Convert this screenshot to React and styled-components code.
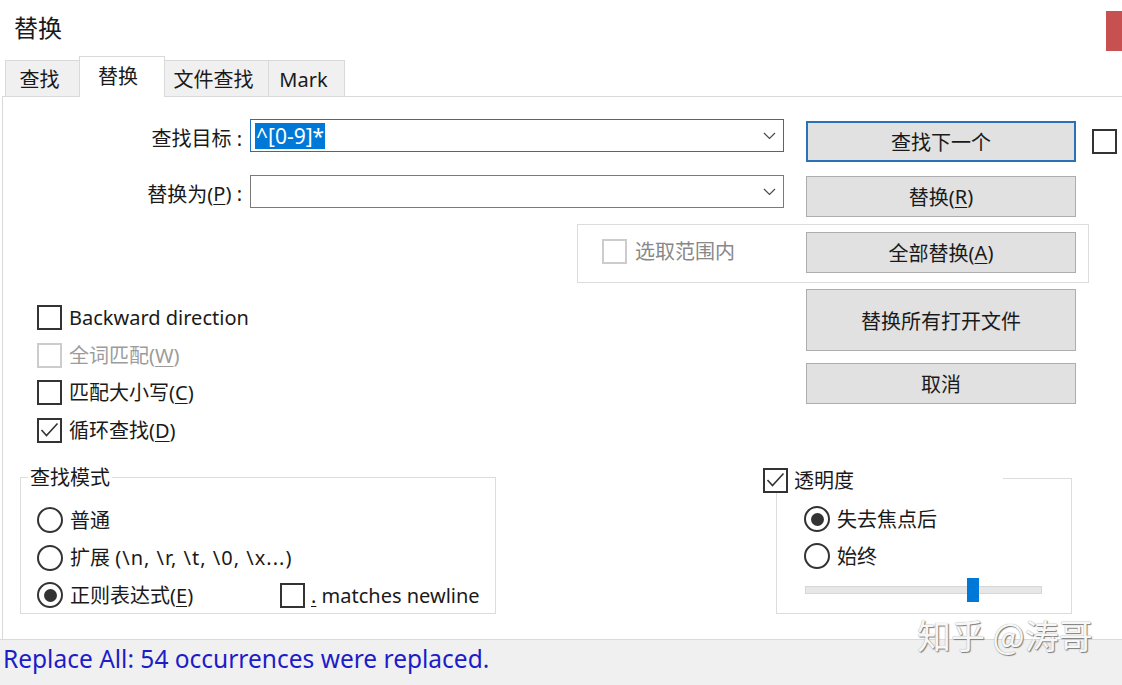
import React from "react";
import styled, { createGlobalStyle } from "styled-components";

const GlobalStyle = createGlobalStyle`
  html, body { margin: 0; padding: 0; background: #fff; }
  body {
    font-family: "Noto Sans", "Noto Sans CJK SC", sans-serif;
    color: #1a1a1a;
  }
  * { box-sizing: border-box; }
`;

const Window = styled.div`
  position: relative;
  width: 1122px;
  height: 685px;
  display: flex;
  flex-direction: column;
  overflow: hidden;
  background: #fff;
`;

const TitleBar = styled.div`
  height: 56px;
  flex-shrink: 0;
  display: flex;
  align-items: flex-start;
  justify-content: space-between;
`;

const Title = styled.h1`
  margin: 11px 0 0 14px;
  font-size: 24px;
  font-weight: 400;
  line-height: 34px;
`;

const CloseButton = styled.div`
  margin-top: 11px;
  width: 16px;
  height: 40px;
  background: #c75050;
`;

const TabStrip = styled.div`
  height: 40px;
  flex-shrink: 0;
  display: flex;
  align-items: flex-end;
  padding-left: 5px;
`;

const Tab = styled.div`
  position: relative;
  z-index: ${(p) => (p.$active ? 2 : 1)};
  width: ${(p) => p.$w}px;
  height: ${(p) => (p.$active ? 41 : 36)}px;
  margin-bottom: ${(p) => (p.$active ? -1 : 0)}px;
  margin-left: -1px;
  background: ${(p) => (p.$active ? "#fff" : "#f0f0f0")};
  border: 1px solid #d9d9d9;
  border-bottom: none;
  display: flex;
  align-items: center;
  justify-content: center;
  padding: ${(p) => (p.$active ? "0 8px 0 0" : "3px 6px 0 0")};
  font-size: 20px;
  line-height: 24px;
  &:first-child { margin-left: 0; }
`;

const Panel = styled.div`
  flex: 1;
  margin-left: 2px;
  border-top: 1px solid #d9d9d9;
  border-left: 1px solid #d9d9d9;
  display: flex;
  flex-direction: column;
`;

const UpperGrid = styled.div`
  margin-top: 22px;
  display: grid;
  grid-template-columns: 247px 534px 22px 270px 16px 25px;
  grid-template-rows: 56px 49px 65px 74px auto;
`;

const FieldLabel = styled.label`
  grid-column: 1;
  grid-row: ${(p) => p.$row};
  align-self: start;
  height: 33px;
  display: flex;
  align-items: center;
  justify-content: flex-end;
  padding: 4px 8px 0 0;
  font-size: 20px;
  white-space: pre;
`;

const Combo = styled.div`
  grid-column: 2;
  grid-row: ${(p) => p.$row};
  align-self: start;
  height: 33px;
  border: 1px solid ${(p) => (p.$focused ? "#1f72c0" : "#7a7a7a")};
  background: #fff;
  display: flex;
  align-items: center;
  justify-content: space-between;
  padding: 0 7px 0 4px;
`;

const Selected = styled.span`
  background: #0078d7;
  color: #fff;
  font-size: 21px;
  line-height: 26px;
  padding: 0 1px;
`;

const DialogButton = styled.button`
  grid-column: 4;
  grid-row: ${(p) => p.$row};
  align-self: start;
  margin-top: ${(p) => p.$top || 0}px;
  height: ${(p) => p.$h || 41}px;
  background: #e1e1e1;
  border: ${(p) => (p.$default ? "2px solid #2a72b5" : "1px solid #adadad")};
  font-family: inherit;
  font-size: 20px;
  color: #1a1a1a;
  padding: 0;
  display: flex;
  align-items: center;
  justify-content: center;
`;

const ScopeGroup = styled.div`
  grid-column: 2 / 6;
  grid-row: 3;
  align-self: start;
  margin: 0 3px 0 327px;
  height: 59px;
  border: 1px solid #dcdcdc;
  display: flex;
  align-items: flex-start;
  padding: 14px 0 0 24px;
`;

const CornerCheck = styled.div`
  grid-column: 6;
  grid-row: 1;
  margin-top: 10px;
`;

const OptionList = styled.div`
  grid-column: 1 / 3;
  grid-row: 4 / 6;
  padding: 16px 0 0 34px;
  display: flex;
  flex-direction: column;
  gap: 12.5px;
`;

const OptionRow = styled.div`
  height: 25px;
  display: flex;
  align-items: center;
  gap: ${(p) => p.$gap ?? 7}px;
  font-size: 20px;
  line-height: 25px;
  color: ${(p) => (p.$disabled ? (p.$dim ? "#888" : "#9c9c9c") : "#1a1a1a")};
  white-space: nowrap;
`;

const Escapes = styled.span`
  letter-spacing: 1px;
`;

const Box = styled.span`
  flex-shrink: 0;
  width: 25px;
  height: 25px;
  border: 2px solid ${(p) => (p.$disabled ? "#cccccc" : "#333")};
  background: #fff;
  display: flex;
  align-items: center;
  justify-content: center;
`;

const RadioCircle = styled.span`
  flex-shrink: 0;
  width: 26px;
  height: 26px;
  border-radius: 50%;
  border: 2px solid #333;
  background: #fff;
  display: flex;
  align-items: center;
  justify-content: center;
  &::after {
    content: "";
    display: ${(p) => (p.$on ? "block" : "none")};
    width: 13px;
    height: 13px;
    border-radius: 50%;
    background: #333;
  }
`;

const U = styled.span`
  text-decoration: underline;
  text-underline-offset: 3px;
  text-decoration-thickness: 1px;
`;

const LowerRow = styled.div`
  margin-top: 25px;
  display: grid;
  grid-template-columns: 476px 296px;
  column-gap: 280px;
  padding-left: 17px;
  align-items: start;
`;

const GroupBox = styled.fieldset`
  margin: 0;
  padding: 0;
  min-width: 0;
  border: 1px solid #dcdcdc;
`;

const GroupLegend = styled.legend`
  margin-left: 7px;
  padding: 0 2px;
  font-size: 20px;
  line-height: 20px;
`;

const CheckLegend = styled.legend`
  margin-left: -14px;
  padding: 0;
  width: 240px;
  height: 21px;
  background: #fff;
  display: flex;
  align-items: flex-start;
  font-size: 20px;
  line-height: 25px;
`;

const LegendBox = styled.span`
  display: flex;
  align-items: center;
  gap: 6px;
  height: 25px;
`;

const GroupBody = styled.div`
  padding: ${(p) => p.$pad};
  display: flex;
  flex-direction: column;
  gap: ${(p) => p.$gap}px;
`;

const SplitRow = styled.div`
  display: grid;
  grid-template-columns: 243px auto;
  align-items: center;
`;

const Slider = styled.div`
  position: relative;
  margin: ${(p) => p.$mt}px 0 0 1px;
  width: 237px;
  height: 24px;
`;

const Track = styled.div`
  margin-top: 8px;
  height: 8px;
  background: #e7e7e7;
  border: 1px solid #d6d6d6;
`;

const Thumb = styled.div`
  position: absolute;
  top: 0;
  width: 12px;
  height: 24px;
  background: #0078d7;
`;

const StatusBar = styled.div`
  height: 46px;
  flex-shrink: 0;
  background: #f0f0f0;
  border-top: 1px solid #dadada;
  padding-left: 3px;
  font-size: 24.5px;
  line-height: 38px;
  color: #1c1cc9;
  white-space: nowrap;
`;

const Watermark = styled.div`
  position: absolute;
  left: 917px;
  top: 615px;
  font-family: "Noto Sans CJK SC", sans-serif;
  font-size: 34px;
  line-height: 40px;
  color: #f7f7f7;
  text-shadow: 1px 1px 1px #7c7c7c, 0 0 1px #9a9a9a;
  white-space: pre;
  pointer-events: none;
`;

const Chevron = () => (
  <svg width="13" height="8" viewBox="0 0 13 8">
    <polyline points="1,1 6.5,6.5 12,1" fill="none" stroke="#4a4a4a" strokeWidth="1.2" />
  </svg>
);

const CheckMark = () => (
  <svg width="21" height="21" viewBox="0 0 21 21">
    <polyline points="2.5,10 7.5,15.5 18.5,3.5" fill="none" stroke="#333" strokeWidth="1.6" />
  </svg>
);

const Check = ({ checked, disabled }) => (
  <Box $disabled={disabled}>{checked ? <CheckMark /> : null}</Box>
);

const tabs = [
  { label: "查找", w: 75 },
  { label: "替换", w: 86, active: true },
  { label: "文件查找", w: 105 },
  { label: "Mark", w: 77 },
];

const sliderValue = 72;

export default function App() {
  return (
    <>
      <GlobalStyle />
      <Window>
        <TitleBar>
          <Title>替换</Title>
          <CloseButton />
        </TitleBar>

        <TabStrip>
          {tabs.map((t) => (
            <Tab key={t.label} $w={t.w} $active={t.active}>
              {t.label}
            </Tab>
          ))}
        </TabStrip>

        <Panel>
          <UpperGrid>
            <FieldLabel $row={1}>查找目标 :</FieldLabel>
            <Combo $row={1} $focused>
              <Selected>^[0-9]*</Selected>
              <Chevron />
            </Combo>
            <DialogButton $row={1} $top={2} $h={41} $default>
              查找下一个
            </DialogButton>
            <CornerCheck>
              <Check />
            </CornerCheck>

            <FieldLabel $row={2}>
              替换为(<U>P</U>) :
            </FieldLabel>
            <Combo $row={2}>
              <span />
              <Chevron />
            </Combo>
            <DialogButton $row={2} $top={1}>
              替换(<U>R</U>)
            </DialogButton>

            <ScopeGroup>
              <OptionRow $disabled $dim $gap={8}>
                <Check disabled />
                选取范围内
              </OptionRow>
            </ScopeGroup>
            <DialogButton $row={3} $top={8}>
              全部替换(<U>A</U>)
            </DialogButton>

            <DialogButton $row={4} $h={62}>
              替换所有打开文件
            </DialogButton>
            <DialogButton $row={5}>取消</DialogButton>

            <OptionList>
              <OptionRow>
                <Check />
                Backward direction
              </OptionRow>
              <OptionRow $disabled>
                <Check disabled />
                <span>
                  全词匹配(<U>W</U>)
                </span>
              </OptionRow>
              <OptionRow>
                <Check />
                <span>
                  匹配大小写(<U>C</U>)
                </span>
              </OptionRow>
              <OptionRow>
                <Check checked />
                <span>
                  循环查找(<U>D</U>)
                </span>
              </OptionRow>
            </OptionList>
          </UpperGrid>

          <LowerRow>
            <GroupBox>
              <GroupLegend>查找模式</GroupLegend>
              <GroupBody $pad="20px 14px 5px 16px" $gap={12.5}>
                <OptionRow>
                  <RadioCircle />
                  普通
                </OptionRow>
                <OptionRow>
                  <RadioCircle />
                  <span>
                    扩展 <Escapes>{"(\\n, \\r, \\t, \\0, \\x...)"}</Escapes>
                  </span>
                </OptionRow>
                <SplitRow>
                  <OptionRow>
                    <RadioCircle $on />
                    <span>
                      正则表达式(<U>E</U>)
                    </span>
                  </OptionRow>
                  <OptionRow $gap={6}>
                    <Check />
                    <span>
                      <U>.</U> matches newline
                    </span>
                  </OptionRow>
                </SplitRow>
              </GroupBody>
            </GroupBox>

            <GroupBox>
              <CheckLegend>
                <LegendBox>
                  <Check checked />
                  透明度
                </LegendBox>
              </CheckLegend>
              <GroupBody $pad="18px 0 11px 27px" $gap={12}>
                <OptionRow>
                  <RadioCircle $on />
                  失去焦点后
                </OptionRow>
                <OptionRow>
                  <RadioCircle />
                  始终
                </OptionRow>
                <Slider $mt={-3}>
                  <Track />
                  <Thumb style={{ left: `${(sliderValue / 100) * (237 - 12)}px` }} />
                </Slider>
              </GroupBody>
            </GroupBox>
          </LowerRow>
        </Panel>

        <StatusBar>Replace All: 54 occurrences were replaced.</StatusBar>
        <Watermark>知乎 @涛哥</Watermark>
      </Window>
    </>
  );
}
